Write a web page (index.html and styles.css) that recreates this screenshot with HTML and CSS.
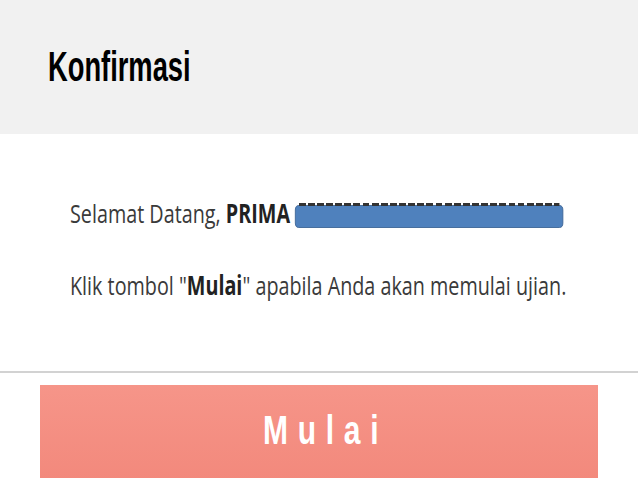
FILE: index.html
```html
<!DOCTYPE html>
<html lang="id">

<head>
    <meta charset="UTF-8">
    <meta name="viewport" content="width=device-width, initial-scale=1.0">
    <title>Konfirmasi</title>
    <link rel="stylesheet" href="styles.css">
</head>

<body>
    <div class="modal">
        <header class="modal-head">
            <h1><span>Konfirmasi</span></h1>
        </header>

        <div class="modal-body">
            <p>Selamat Datang, <b>PRIMA</b> <span class="redact"></span></p>
            <p>Klik tombol "<b>Mulai</b>" apabila Anda akan memulai ujian.</p>
        </div>

        <div class="modal-foot">
            <button class="btn-mulai"><span>Mulai</span></button>
        </div>
    </div>
</body>

</html>
```

FILE: styles.css
```css
body {
    margin: 0;
    background: #fff;
    font-family: 'Open Sans', 'Liberation Sans', sans-serif;
    overflow: hidden;
}

.modal-head {
    background: #f1f1f1;
    height: 134px;
    display: flex;
    align-items: center;
    padding-left: 48px;
}

.modal-head h1 {
    margin: 0;
    font-family: 'Liberation Sans', Arial, sans-serif;
    font-size: 42px;
    font-weight: bold;
    color: #000;
}

.modal-head h1 span {
    display: inline-block;
    transform: scaleX(0.65);
    transform-origin: left center;
}

.modal-body {
    padding: 61px 0 68px 70px;
    border-bottom: 2px solid #d2d2d2;
}

.modal-body p {
    margin: 0 0 36px;
    font-size: 26px;
    line-height: 36px;
    color: #3a3a3a;
    white-space: nowrap;
    transform: scaleX(0.76);
    transform-origin: left center;
}

.modal-body p:last-child {
    margin-bottom: 0;
}

.modal-body b {
    color: #222;
}

.redact {
    position: relative;
    display: inline-block;
    width: 351px;
    height: 21px;
    vertical-align: -5px;
    background: #4f81bd;
    border: 1px solid #3b6394;
    border-radius: 5px;
}

.redact::before {
    content: "";
    position: absolute;
    left: 4px;
    right: 4px;
    top: -3px;
    height: 3px;
    background: repeating-linear-gradient(90deg, #333 0 9px, transparent 9px 12px);
}

.modal-foot {
    padding: 12px 40px 0;
}

.btn-mulai {
    display: block;
    width: 100%;
    padding: 22px 0 42px;
    border: none;
    background: linear-gradient(#f69589, #f2877a);
    color: #fff;
    font-family: 'Liberation Sans', Arial, sans-serif;
    font-size: 40px;
    font-weight: bold;
    line-height: 46px;
    text-align: center;
}

.btn-mulai span {
    display: inline-block;
    letter-spacing: 13px;
    margin-right: -13px;
    transform: scaleX(0.75);
}
```
